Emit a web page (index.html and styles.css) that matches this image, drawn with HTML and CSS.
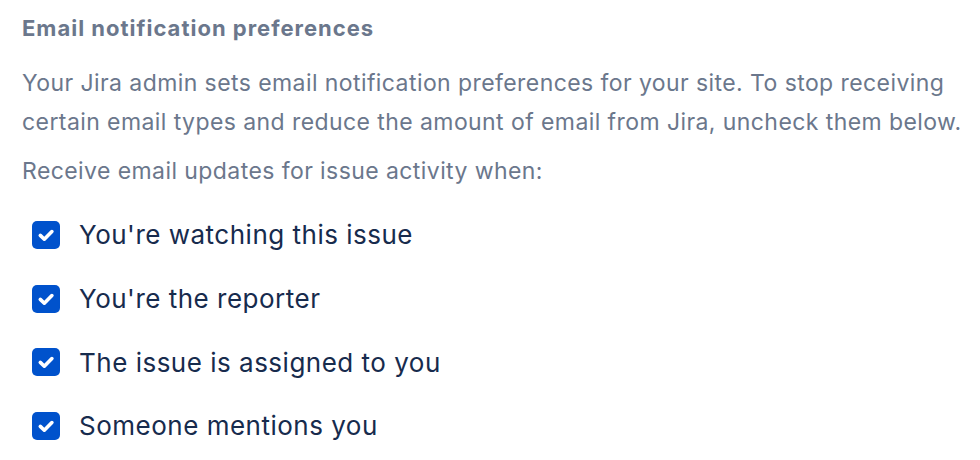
FILE: index.html
```html
<!DOCTYPE html>
<html>
<head>
<meta charset="utf-8">
<link rel="stylesheet" href="styles.css">
</head>
<body>
<section class="prefs">
  <h2 class="title">Email notification preferences</h2>
  <p class="desc">Your Jira admin sets email notification preferences for your site. To stop receiving certain email types and reduce the amount of email from Jira, uncheck them below.</p>
  <p class="sub">Receive email updates for issue activity when:</p>
  <ul class="options">
    <li class="option"><span class="box"><svg viewBox="0 0 28 28" width="28" height="28"><path d="M8.3 14.4l4 3.8 7.6-7.6" fill="none" stroke="#fff" stroke-width="3.6" stroke-linecap="round" stroke-linejoin="round"/></svg></span><span class="label">You're watching this issue</span></li>
    <li class="option"><span class="box"><svg viewBox="0 0 28 28" width="28" height="28"><path d="M8.3 14.4l4 3.8 7.6-7.6" fill="none" stroke="#fff" stroke-width="3.6" stroke-linecap="round" stroke-linejoin="round"/></svg></span><span class="label">You're the reporter</span></li>
    <li class="option"><span class="box"><svg viewBox="0 0 28 28" width="28" height="28"><path d="M8.3 14.4l4 3.8 7.6-7.6" fill="none" stroke="#fff" stroke-width="3.6" stroke-linecap="round" stroke-linejoin="round"/></svg></span><span class="label">The issue is assigned to you</span></li>
    <li class="option"><span class="box"><svg viewBox="0 0 28 28" width="28" height="28"><path d="M8.3 14.4l4 3.8 7.6-7.6" fill="none" stroke="#fff" stroke-width="3.6" stroke-linecap="round" stroke-linejoin="round"/></svg></span><span class="label">Someone mentions you</span></li>
  </ul>
</section>
</body>
</html>
```
FILE: styles.css
```css
html, body {
  margin: 0;
  padding: 0;
  background: #fff;
}
body {
  font-family: Inter, "Noto Sans", sans-serif;
}
.prefs {
  padding: 13px 0 0 22px;
}
.title {
  margin: 0;
  font-size: 22px;
  font-weight: 700;
  letter-spacing: 1px;
  color: #6b778c;
  line-height: 30px;
}
.desc {
  margin: 21px 0 0 0;
  font-size: 23px;
  line-height: 39px;
  letter-spacing: 0.42px;
  color: #6b778c;
}
.sub {
  margin: 10px 0 0 0;
  font-size: 23px;
  line-height: 39px;
  letter-spacing: 0.42px;
  color: #6b778c;
}
.options {
  list-style: none;
  margin: 12px 0 0 0;
  padding: 0 0 0 10px;
}
.option {
  display: flex;
  align-items: center;
  height: 63.7px;
}
.box {
  width: 28px;
  height: 28px;
  border-radius: 5px;
  background: #0052cc;
  display: flex;
  align-items: center;
  justify-content: center;
  margin-right: 19px;
}
.label {
  font-size: 26px;
  letter-spacing: 0.5px;
  color: #172b4d;
}
```
